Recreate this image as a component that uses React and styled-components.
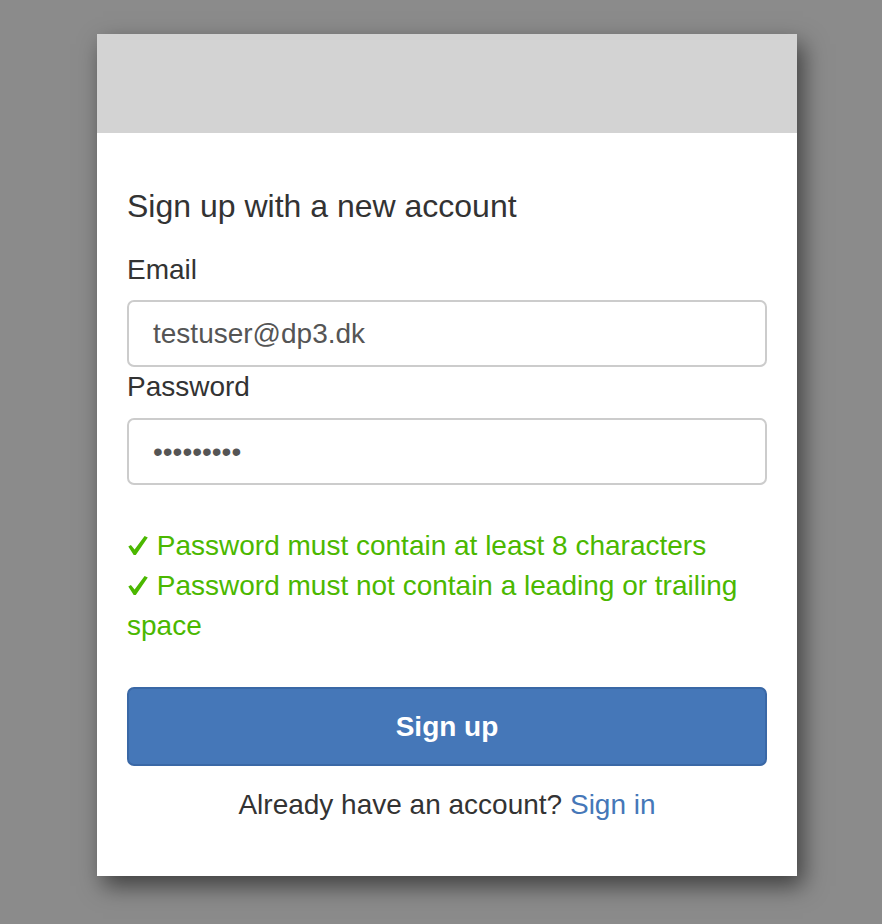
import React from "react";
import styled, { createGlobalStyle } from "styled-components";

const Global = createGlobalStyle`
  html, body { margin: 0; padding: 0; background: #8b8b8b; }
  body { font-family: "Liberation Sans", Arial, sans-serif; }
  * { box-sizing: border-box; }
`;

const Page = styled.div`
  min-height: 924px;
  padding: 34px 0 0 97px;
`;

const Card = styled.div`
  width: 700px;
  height: 842px;
  background: #fff;
  box-shadow: 6px 10px 22px rgba(0, 0, 0, 0.55);
  display: flex;
  flex-direction: column;
`;

const Banner = styled.div`
  height: 99px;
  background: #d3d3d3;
`;

const Body = styled.div`
  padding: 53px 30px 0 30px;
  display: flex;
  flex-direction: column;
`;

const Title = styled.h1`
  margin: 0 0 24px;
  font-size: 32px;
  font-weight: 400;
  line-height: 40px;
  color: #333;
`;

const Label = styled.label`
  font-size: 28px;
  line-height: 40px;
  color: #333;
  margin-bottom: ${(p) => p.$mb || 10}px;
`;

const Input = styled.div`
  height: 67px;
  border: 2px solid #ccc;
  border-radius: 7px;
  padding: 0 24px;
  display: flex;
  align-items: center;
  font-size: 28px;
  color: #555;
`;

const Rules = styled.div`
  margin-top: 41px;
  display: flex;
  flex-direction: column;
`;

const Rule = styled.div`
  font-size: 28px;
  line-height: 40px;
  color: #4bb800;
`;

const CheckSvg = styled.svg`
  width: 20px;
  height: 19px;
  margin: 0 1px 0 1px;
  vertical-align: baseline;
  fill: currentColor;
`;

const Check = () => (
  <CheckSvg viewBox="0 0 20 19" aria-hidden="true">
    <polygon points="0.3,10.4 2.9,9 6.6,13.6 16.6,0 19.8,1.6 7.8,19 5.7,19" />
  </CheckSvg>
);

const Button = styled.button`
  margin-top: 41px;
  height: 79px;
  border: 2px solid #3a68a6;
  border-radius: 7px;
  background: #4577b8;
  color: #fff;
  font-family: inherit;
  font-size: 28px;
  font-weight: 700;
`;

const Footer = styled.p`
  margin: 19px 0 0;
  text-align: center;
  font-size: 28px;
  line-height: 40px;
  color: #333;
`;

const Link = styled.a`
  color: #4577b8;
  text-decoration: none;
`;

export default function App() {
  return (
    <>
      <Global />
      <Page>
        <Card>
          <Banner />
          <Body>
            <Title>Sign up with a new account</Title>
            <Label $mb={10}>Email</Label>
            <Input>testuser@dp3.dk</Input>
            <Label $mb={11}>Password</Label>
            <Input>•••••••••</Input>
            <Rules>
              <Rule><Check /> Password must contain at least 8 characters</Rule>
              <Rule><Check /> Password must not contain a leading or trailing space</Rule>
            </Rules>
            <Button>Sign up</Button>
            <Footer>
              Already have an account? <Link href="#">Sign in</Link>
            </Footer>
          </Body>
        </Card>
      </Page>
    </>
  );
}
